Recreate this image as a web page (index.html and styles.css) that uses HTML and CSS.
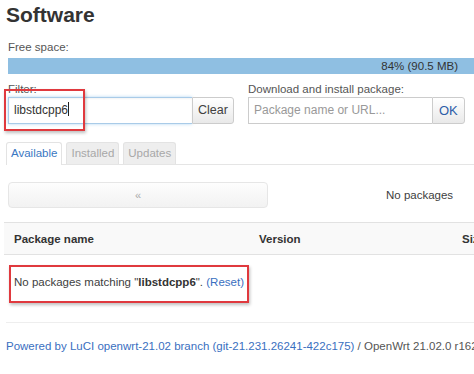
FILE: index.html
```html
<!DOCTYPE html>
<html>
<head>
<meta charset="utf-8">
<link rel="stylesheet" href="styles.css">
</head>
<body>
<div class="page">
  <h2 class="title">Software</h2>

  <div class="space-label">Free space:</div>
  <div class="bar"><span class="bar-text">84% (90.5 MB)</span></div>

  <div class="controls">
    <div class="group filter-group">
      <div class="label">Filter:</div>
      <div class="input-row">
        <div class="input focus">libstdcpp6<span class="caret"></span></div>
        <div class="btn">Clear</div>
      </div>
      <div class="annot annot-filter"></div>
    </div>
    <div class="group dl-group">
      <div class="label">Download and install package:</div>
      <div class="input-row">
        <div class="input placeholder">Package name or URL...</div>
        <div class="btn btn-ok">OK</div>
      </div>
    </div>
  </div>

  <div class="tabs">
    <div class="tab active">Available</div>
    <div class="tab">Installed</div>
    <div class="tab">Updates</div>
  </div>

  <div class="pager">
    <div class="pager-btn">«</div>
    <div class="pager-info">No packages</div>
  </div>

  <div class="table">
    <div class="thead">
      <div class="th c1">Package name</div>
      <div class="th c2">Version</div>
      <div class="th c3">Size</div>
    </div>
    <div class="msg-row">
      <div class="msg">No packages matching "<b>libstdcpp6</b>". <span class="link">(Reset)</span></div>
      <div class="annot annot-msg"></div>
    </div>
  </div>

  <div class="footer">
    <span class="link">Powered by LuCI openwrt-21.02 branch (git-21.231.26241-422c175)</span> / OpenWrt 21.02.0 r16279-5cc0535800
  </div>
</div>
</body>
</html>
```

FILE: styles.css
```css
html, body {
  margin: 0;
  padding: 0;
  background: #fff;
  overflow: hidden;
}
body {
  font-family: "Liberation Sans", Arial, sans-serif;
  color: #404040;
  font-size: 11.5px;
}
.page {
  width: 620px;
  padding: 0 0 0 6px;
}
.title {
  margin: 0;
  padding-top: 2px;
  font-size: 21px;
  line-height: 26px;
  font-weight: bold;
  color: #333;
}
.space-label {
  margin-top: 12px;
  margin-left: 2px;
  line-height: 14px;
  color: #555;
}
.bar {
  box-sizing: border-box;
  margin: 4px 0 0 2px;
  height: 16px;
  background: #8fbfe2;
  width: 466px;
  padding-right: 16px;
  text-align: right;
}
.bar-text {
  line-height: 16px;
  color: #333;
}
.controls {
  display: flex;
  margin-top: 8px;
  margin-left: 2px;
}
.group {
  display: flex;
  flex-direction: column;
  position: relative;
}
.filter-group {
  width: 240px;
}
.label {
  line-height: 14px;
  color: #555;
  margin-bottom: 1px;
}
.input-row {
  display: flex;
  height: 27px;
}
.input {
  box-sizing: border-box;
  height: 27px;
  border: 1px solid #ccc;
  border-right: none;
  padding: 0 5px;
  line-height: 25px;
  font-size: 12px;
  color: #333;
  background: #fff;
}
.filter-group .input {
  width: 184px;
}
.dl-group .input {
  width: 184px;
}
.input.focus {
  border-color: #a9cbe8;
  box-shadow: inset 0 1px 2px rgba(0,0,0,0.05), 0 0 3px rgba(102,175,233,0.5);
}
.caret {
  display: inline-block;
  width: 1px;
  height: 14px;
  background: #222;
  vertical-align: -2px;
}
.placeholder {
  color: #999;
}
.btn {
  box-sizing: border-box;
  height: 27px;
  border: 1px solid #ccc;
  border-radius: 0 3px 3px 0;
  padding: 0 5px;
  line-height: 25px;
  font-size: 12.5px;
  color: #404040;
  background: linear-gradient(#fff, #e9e9e9);
}
.btn-ok {
  color: #2e5da8;
  padding: 0 6px;
  font-size: 13px;
}
.annot {
  position: absolute;
  border: 2px solid #e0393e;
  box-shadow: 1px 2px 3px rgba(0,0,0,0.25);
  pointer-events: none;
}
.annot-filter {
  left: -4px;
  top: 7px;
  width: 77px;
  height: 38px;
}
.tabs {
  display: flex;
  margin-top: 18px;
  border-bottom: 1px solid #e5e5e5;
  height: 22px;
  gap: 4px;
}
.tab {
  box-sizing: border-box;
  height: 22px;
  padding: 0 4px;
  line-height: 21px;
  font-size: 11.5px;
  color: #a8a8a8;
  background: #eee;
  border: 1px solid #e3e3e3;
  border-bottom: none;
  border-radius: 3px 3px 0 0;
}
.tab.active {
  background: #fff;
  color: #3a77c2;
  height: 23px;
  border-color: #e3e3e3;
}
.pager {
  display: flex;
  align-items: center;
  margin-top: 17px;
  margin-left: 2px;
  height: 26px;
}
.pager-btn {
  box-sizing: border-box;
  width: 260px;
  height: 26px;
  border: 1px solid #e6e6e6;
  border-radius: 4px;
  background: linear-gradient(#fdfdfd, #f2f2f2);
  text-align: center;
  line-height: 24px;
  color: #aaa;
  font-size: 11px;
}
.pager-info {
  margin-left: 118px;
  color: #404040;
}
.table {
  margin-top: 14px;
  margin-left: -2px;
}
.thead {
  display: flex;
  height: 31px;
  border-top: 1px solid #e2e2e2;
  border-bottom: 1px solid #e2e2e2;
  background: #f9f9f9;
  align-items: center;
  font-weight: bold;
  color: #333;
}
.th {
  box-sizing: border-box;
  padding-left: 10px;
}
.c1 { width: 245px; }
.c2 { width: 203px; }
.c3 { width: 100px; }
.msg-row {
  position: relative;
  height: 55px;
}
.msg {
  padding: 20px 0 0 10px;
  line-height: 14px;
  color: #404040;
}
.msg b {
  color: #333;
}
.link {
  color: #3a6fbf;
}
.annot-msg {
  left: 5px;
  top: 10px;
  width: 236px;
  height: 34px;
}
.footer {
  margin-top: 12px;
  border-top: 1px solid #eee;
  padding-top: 16px;
  line-height: 14px;
  color: #555;
  width: 600px;
}
```
